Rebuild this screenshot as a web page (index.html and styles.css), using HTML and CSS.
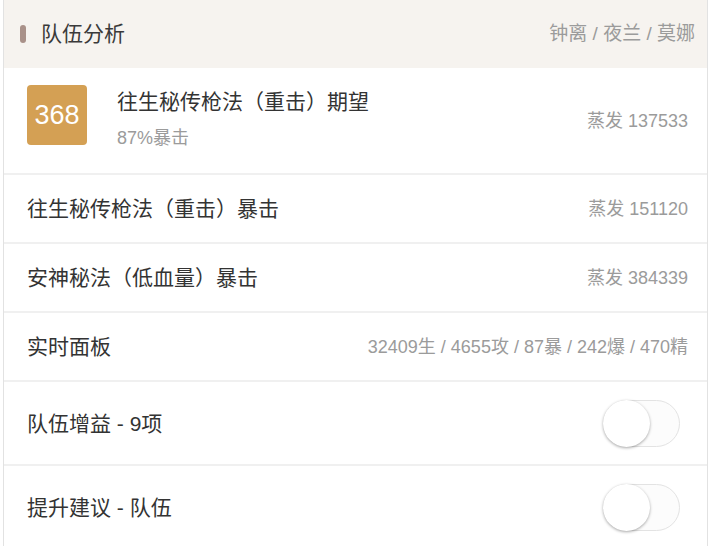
FILE: index.html
```html
<!DOCTYPE html>
<html lang="zh-CN">
<head>
<meta charset="utf-8">
<title>队伍分析</title>
<link rel="stylesheet" href="styles.css">
</head>
<body>
<div class="card">
  <div class="header">
    <div class="header-left">
      <span class="accent"></span>
      <span class="header-title">队伍分析</span>
    </div>
    <div class="header-right">钟离 / 夜兰 / 莫娜</div>
  </div>

  <div class="row row-main">
    <div class="main-left">
      <div class="badge">368</div>
      <div class="main-text">
        <div class="main-title">往生秘传枪法（重击）期望</div>
        <div class="main-sub">87%暴击</div>
      </div>
    </div>
    <div class="value">蒸发 137533</div>
  </div>

  <div class="row">
    <div class="label">往生秘传枪法（重击）暴击</div>
    <div class="value">蒸发 151120</div>
  </div>

  <div class="row">
    <div class="label">安神秘法（低血量）暴击</div>
    <div class="value">蒸发 384339</div>
  </div>

  <div class="row">
    <div class="label">实时面板</div>
    <div class="value">32409生 / 4655攻 / 87暴 / 242爆 / 470精</div>
  </div>

  <div class="row row-toggle">
    <div class="label">队伍增益 - 9项</div>
    <div class="toggle"><span class="knob"></span></div>
  </div>

  <div class="row row-toggle">
    <div class="label">提升建议 - 队伍</div>
    <div class="toggle"><span class="knob"></span></div>
  </div>
</div>
</body>
</html>
```

FILE: styles.css
```css
html, body {
  margin: 0;
  padding: 0;
  background: #ffffff;
}

body {
  font-family: "Liberation Sans", "Noto Sans CJK SC", sans-serif;
  color: #333333;
}

.card {
  margin-left: 3px;
  width: 703px;
  border-left: 1px solid #e2e2e2;
  border-right: 1px solid #e2e2e2;
  background: #ffffff;
  min-height: 546px;
}

.header {
  height: 68px;
  box-sizing: border-box;
  background: #f6f3ef;
  display: flex;
  align-items: center;
  justify-content: space-between;
  padding: 0 12px 5px 16px;
}

.header-left {
  display: flex;
  align-items: center;
}

.accent {
  width: 6px;
  height: 18px;
  border-radius: 3px;
  background: #a99189;
  margin-right: 15px;
  position: relative;
  top: 2px;
}

.header-title {
  font-size: 21px;
  color: #3a3a3a;
}

.header-right {
  font-size: 19px;
  color: #9b9b9b;
}

.row {
  display: flex;
  align-items: center;
  justify-content: space-between;
  height: 67px;
  padding: 0 19px 0 23px;
  border-bottom: 2px solid #f0f0f0;
}

.row-main {
  height: auto;
  padding-top: 17px;
  padding-bottom: 20px;
}

.main-left {
  display: flex;
  align-items: flex-start;
}

.badge {
  width: 60px;
  height: 60px;
  border-radius: 4px;
  background: #d4a054;
  color: #ffffff;
  font-size: 27px;
  display: flex;
  align-items: center;
  justify-content: center;
}

.main-text {
  margin-left: 30px;
  display: flex;
  flex-direction: column;
}

.main-title {
  font-size: 21px;
  line-height: 34px;
  color: #333333;
}

.main-sub {
  font-size: 18px;
  line-height: 30px;
  margin-top: 4px;
  color: #9b9b9b;
}

.label {
  font-size: 21px;
  color: #333333;
  padding-bottom: 4px;
}

.value {
  font-size: 18px;
  color: #9b9b9b;
  padding-bottom: 3px;
}

.row-main .value {
  padding-bottom: 0;
}

.row-toggle {
  height: 82px;
  padding-right: 27px;
}

.row-toggle .label {
  padding-bottom: 2px;
}

.toggle {
  position: relative;
  width: 75px;
  height: 45px;
  border: 1px solid #e3e3e3;
  border-radius: 24px;
  background: #fcfcfc;
}

.knob {
  position: absolute;
  left: -1px;
  top: -1px;
  width: 47px;
  height: 47px;
  border-radius: 50%;
  background: #ffffff;
  box-shadow: 0 1px 3px rgba(0, 0, 0, 0.35);
}
```
